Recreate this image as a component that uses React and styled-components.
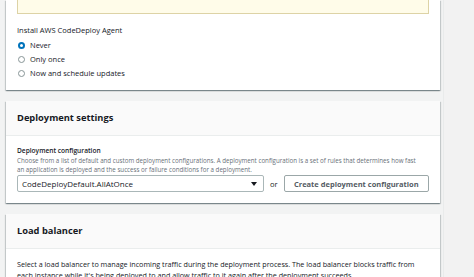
import React from "react";
import styled, { createGlobalStyle } from "styled-components";

const Global = createGlobalStyle`
  html, body { margin: 0; padding: 0; background: #f2f3f3; }
  body { font-family: "Open Sans", "Noto Sans", Arial, sans-serif; color: #16191f; overflow: hidden; }
`;

const Page = styled.div`
  display: flex;
  width: 474px;
  height: 277px;
  overflow: hidden;
`;

const Main = styled.div`
  width: 434px;
  margin-left: 6px;
  display: flex;
  flex-direction: column;
  gap: 11px;
`;

const Side = styled.div`
  flex: 1;
  margin-left: 3px;
  border-left: 1px solid #e9ebeb;
  background: #f2f2f2;
`;

const Panel = styled.section`
  background: #fff;
  box-shadow: 0 1px 1px 0 rgba(0, 28, 36, 0.3), 1px 1px 1px 0 rgba(0, 28, 36, 0.15),
    -1px 1px 1px 0 rgba(0, 28, 36, 0.15);
  flex-shrink: 0;
`;

const Header = styled.div`
  box-sizing: border-box;
  display: flex;
  align-items: center;
  padding: 0 11px 2px;
  background: #fafafa;
  border-bottom: 1px solid #eaeded;
  height: 35px;
`;

const Title = styled.h2`
  margin: 0;
  font-size: 9.3px;
  font-weight: 700;
  color: #16191f;
`;

const Body = styled.div`
  padding: ${(p) => p.$pad || "10px 11px 11px"};
`;

const Warning = styled.div`
  height: 13px;
  background: #fffce9;
  border: 1px solid #ddd3a6;
  border-top: none;
`;

const Label = styled.div`
  font-size: ${(p) => (p.$strong ? "6.6px" : "7.5px")};
  font-weight: ${(p) => (p.$strong ? 600 : 400)};
  line-height: 10px;
  margin-top: ${(p) => p.$mt || 0}px;
  color: #16191f;
`;

const Desc = styled.div`
  font-size: 6.2px;
  line-height: 9px;
  color: #687078;
  padding-right: 9px;
`;

const RadioList = styled.div`
  display: flex;
  flex-direction: column;
  gap: 4px;
  margin-top: 5px;
`;

const RadioRow = styled.label`
  display: flex;
  align-items: center;
  gap: 5px;
  height: 10px;
  font-size: 7.5px;
  padding-left: 1px;
`;

const RadioDot = styled.span`
  width: 7px;
  height: 7px;
  box-sizing: border-box;
  border-radius: 50%;
  border: ${(p) => (p.$on ? "2px solid #0073bb" : "1px solid #879596")};
  background: #fff;
`;

const ConfigRow = styled.div`
  display: flex;
  align-items: center;
  margin-top: 1px;
`;

const Select = styled.div`
  width: 248px;
  height: 17px;
  box-sizing: border-box;
  border: 1px solid #aab7b8;
  border-radius: 2px;
  display: flex;
  align-items: center;
  justify-content: space-between;
  padding: 0 6px 0 4px;
  font-size: 8px;
`;

const Caret = styled.span`
  width: 0;
  height: 0;
  border-left: 3px solid transparent;
  border-right: 3px solid transparent;
  border-top: 4px solid #16191f;
`;

const Or = styled.span`
  font-size: 7.5px;
  margin: 0 6px 0 6px;
`;

const Button = styled.button`
  width: 146px;
  height: 17px;
  border: 1px solid #9ba7a8;
  border-radius: 2px;
  background: #fff;
  color: #545b64;
  font-family: inherit;
  font-weight: 700;
  font-size: 7.5px;
  padding: 0;
`;

const Para = styled.p`
  margin: 0;
  font-size: 7.2px;
  line-height: 11px;
  color: #16191f;
`;

export default function App() {
  return (
    <Page>
      <Global />
      <Main>
        <Panel>
          <Body $pad="0 11px 12px">
            <Warning />
            <Label $mt={11}>Install AWS CodeDeploy Agent</Label>
            <RadioList>
              <RadioRow><RadioDot $on />Never</RadioRow>
              <RadioRow><RadioDot />Only once</RadioRow>
              <RadioRow><RadioDot />Now and schedule updates</RadioRow>
            </RadioList>
          </Body>
        </Panel>
        <Panel>
          <Header><Title>Deployment settings</Title></Header>
          <Body>
            <Label $strong>Deployment configuration</Label>
            <Desc>
              Choose from a list of default and custom deployment configurations. A deployment configuration is a set of rules that determines how fast an application is deployed and the success or failure conditions for a deployment.
            </Desc>
            <ConfigRow>
              <Select>CodeDeployDefault.AllAtOnce<Caret /></Select>
              <Or>or</Or>
              <Button>Create deployment configuration</Button>
            </ConfigRow>
          </Body>
        </Panel>
        <Panel>
          <Header><Title>Load balancer</Title></Header>
          <Body>
            <Para>
              Select a load balancer to manage incoming traffic during the deployment process. The load balancer blocks traffic from each instance while it's being deployed to and allow traffic to it again after the deployment succeeds.
            </Para>
          </Body>
        </Panel>
      </Main>
      <Side />
    </Page>
  );
}
